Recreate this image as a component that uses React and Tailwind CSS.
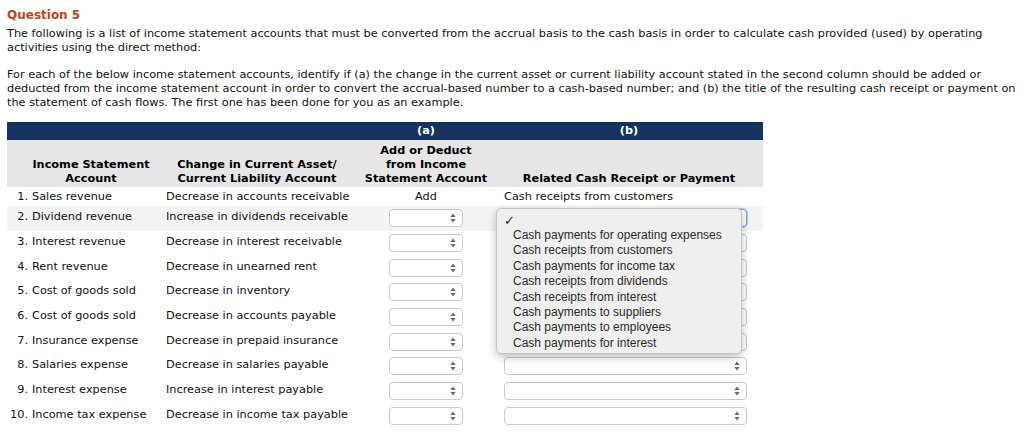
import React from "react";

const rows = [
  ["1.", "Sales revenue", "Decrease in accounts receivable"],
  ["2.", "Dividend revenue", "Increase in dividends receivable"],
  ["3.", "Interest revenue", "Decrease in interest receivable"],
  ["4.", "Rent revenue", "Decrease in unearned rent"],
  ["5.", "Cost of goods sold", "Decrease in inventory"],
  ["6.", "Cost of goods sold", "Decrease in accounts payable"],
  ["7.", "Insurance expense", "Decrease in prepaid insurance"],
  ["8.", "Salaries expense", "Decrease in salaries payable"],
  ["9.", "Interest expense", "Increase in interest payable"],
  ["10.", "Income tax expense", "Decrease in income tax payable"],
];

const options = [
  "Cash payments for operating expenses",
  "Cash receipts from customers",
  "Cash payments for income tax",
  "Cash receipts from dividends",
  "Cash receipts from interest",
  "Cash payments to suppliers",
  "Cash payments to employees",
  "Cash payments for interest",
];

function Arrows() {
  return (
    <svg width="6" height="10" viewBox="0 0 6 10" className="shrink-0">
      <path d="M3 0.5 L5.6 4 L0.4 4 Z" fill="#6b6b6b" />
      <path d="M3 9.5 L5.6 6 L0.4 6 Z" fill="#6b6b6b" />
    </svg>
  );
}

function Select({ w, focus }) {
  return (
    <div
      className={`h-[18px] rounded-[4px] bg-white flex items-center justify-end pr-[6px] ${w} ${
        focus ? "border border-[#7aa7ea] shadow-[0_0_0_1px_#a9c6f2]" : "border border-[#c9c9c9]"
      }`}
    >
      <Arrows />
    </div>
  );
}

const grid = "grid grid-cols-[155px_190px_148px_263px]";

export default function App() {
  return (
    <div
      className="w-[1024px] h-[432px] bg-white text-[#111] overflow-hidden relative"
      style={{ fontFamily: '"DejaVu Sans", Verdana, sans-serif' }}
    >
      <div className="px-[7px] pt-[7px]">
        <div className="text-[12px] leading-[16px] font-bold text-[#c1441b]">Question 5</div>
        <div className="mt-[4px] text-[11.3px] leading-[14px] whitespace-nowrap">
          <div>
            The following is a list of income statement accounts that must be converted from the accrual basis to the cash basis in order to calculate cash provided (used) by operating
          </div>
          <div>activities using the direct method:</div>
        </div>
        <div className="mt-[13px] text-[11.3px] leading-[14px] whitespace-nowrap">
          <div>
            For each of the below income statement accounts, identify if (a) the change in the current asset or current liability account stated in the second column should be added or
          </div>
          <div>
            deducted from the income statement account in order to convert the accrual-based number to a cash-based number; and (b) the title of the resulting cash receipt or payment on
          </div>
          <div>the statement of cash flows. The first one has been done for you as an example.</div>
        </div>

        <div className="mt-[12px] w-[756px] text-[11.3px] whitespace-nowrap">
          <div className={`${grid} h-[18px] bg-[#14335f] text-white font-bold leading-[18px]`}>
            <div></div>
            <div></div>
            <div className="text-center">(a)</div>
            <div className="text-center pr-[5px]">(b)</div>
          </div>
          <div className={`${grid} h-[47px] bg-[#e6e6e6] font-bold leading-[14px] text-black items-end pb-[1px]`}>
            <div className="text-center pl-[13px]">
              Income Statement
              <br />
              Account
            </div>
            <div className="text-center">
              Change in Current Asset/
              <br />
              Current Liability Account
            </div>
            <div className="text-center">
              Add or Deduct
              <br />
              from Income
              <br />
              Statement Account
            </div>
            <div className="text-center pr-[5px]">Related Cash Receipt or Payment</div>
          </div>

          {rows.map((r, i) => (
            <div
              key={i}
              className={`${grid} items-center leading-[14px] ${
                i === 0 ? "h-[19px]" : "h-[24.7px]"
              } ${i === 1 ? "bg-[#f4f4f4]" : ""}`}
            >
              <div className={`flex ${i === 0 ? "" : "-mt-[2px]"}`}>
                <span className="w-[21px] text-right">{r[0]}</span>
                <span className="ml-[4px]">{r[1]}</span>
              </div>
              <div className={`pl-[4px] ${i === 0 ? "" : "-mt-[2px]"}`}>{r[2]}</div>
              <div className="flex justify-center">
                {i === 0 ? <span>Add</span> : <Select w="w-[74px]" />}
              </div>
              <div className="pl-[4px]">
                {i === 0 ? (
                  <span>Cash receipts from customers</span>
                ) : (
                  <Select w="w-[243px]" focus={i === 1} />
                )}
              </div>
            </div>
          ))}
        </div>
      </div>

      <div
        className="absolute left-[496px] top-[208px] w-[246px] h-[146px] rounded-[5px] bg-[#efefef] border border-[#c6c6c6] shadow-[0_3px_8px_rgba(0,0,0,0.25)] text-[12px] leading-[15.4px] text-[#2a2a2a]"
        style={{ fontFamily: '"Liberation Sans", Arial, sans-serif' }}
      >
        <div className="pl-[7px] pt-[3px] h-[19px] text-[13px] leading-[18px]">✓</div>
        <div className="pl-[16px]">
          {options.map((o) => (
            <div key={o}>{o}</div>
          ))}
        </div>
      </div>
    </div>
  );
}
